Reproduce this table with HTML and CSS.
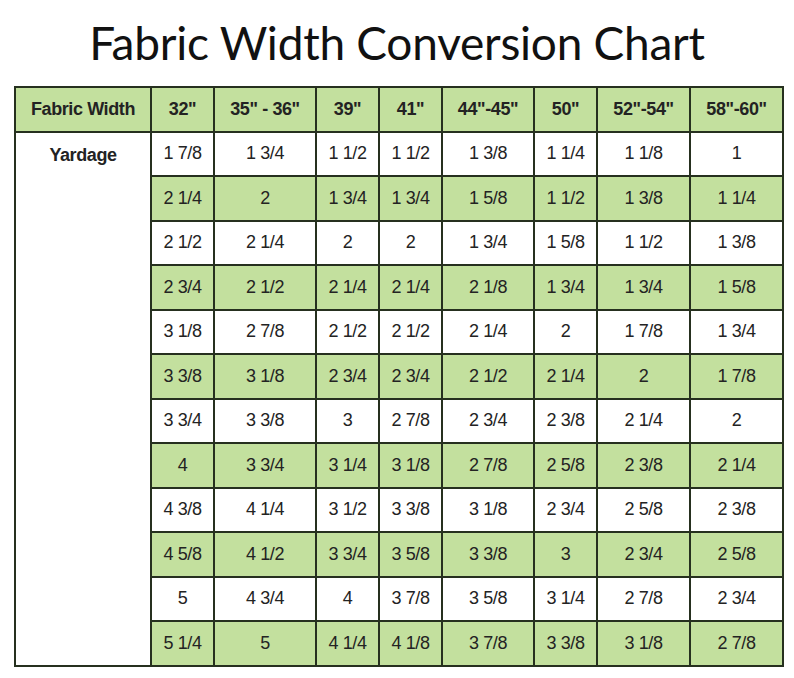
FILE: index.html
```html
<!DOCTYPE html>
<html>
<head>
<meta charset="utf-8">
<link rel="stylesheet" href="styles.css">
</head>
<body>
<h1 class="title">Fabric Width Conversion Chart</h1>
<table class="chart">
<colgroup>
<col class="c0"><col class="c1"><col class="c2"><col class="c3"><col class="c4"><col class="c5"><col class="c6"><col class="c7"><col class="c8">
</colgroup>
<tr class="g head"><th>Fabric Width</th><th>32"</th><th>35" - 36"</th><th>39"</th><th>41"</th><th>44"-45"</th><th>50"</th><th>52"-54"</th><th>58"-60"</th></tr>
<tr><th class="yard" rowspan="12">Yardage</th><td>1 7/8</td><td>1 3/4</td><td>1 1/2</td><td>1 1/2</td><td>1 3/8</td><td>1 1/4</td><td>1 1/8</td><td>1</td></tr>
<tr class="g"><td>2 1/4</td><td>2</td><td>1 3/4</td><td>1 3/4</td><td>1 5/8</td><td>1 1/2</td><td>1 3/8</td><td>1 1/4</td></tr>
<tr><td>2 1/2</td><td>2 1/4</td><td>2</td><td>2</td><td>1 3/4</td><td>1 5/8</td><td>1 1/2</td><td>1 3/8</td></tr>
<tr class="g"><td>2 3/4</td><td>2 1/2</td><td>2 1/4</td><td>2 1/4</td><td>2 1/8</td><td>1 3/4</td><td>1 3/4</td><td>1 5/8</td></tr>
<tr><td>3 1/8</td><td>2 7/8</td><td>2 1/2</td><td>2 1/2</td><td>2 1/4</td><td>2</td><td>1 7/8</td><td>1 3/4</td></tr>
<tr class="g"><td>3 3/8</td><td>3 1/8</td><td>2 3/4</td><td>2 3/4</td><td>2 1/2</td><td>2 1/4</td><td>2</td><td>1 7/8</td></tr>
<tr><td>3 3/4</td><td>3 3/8</td><td>3</td><td>2 7/8</td><td>2 3/4</td><td>2 3/8</td><td>2 1/4</td><td>2</td></tr>
<tr class="g"><td>4</td><td>3 3/4</td><td>3 1/4</td><td>3 1/8</td><td>2 7/8</td><td>2 5/8</td><td>2 3/8</td><td>2 1/4</td></tr>
<tr><td>4 3/8</td><td>4 1/4</td><td>3 1/2</td><td>3 3/8</td><td>3 1/8</td><td>2 3/4</td><td>2 5/8</td><td>2 3/8</td></tr>
<tr class="g"><td>4 5/8</td><td>4 1/2</td><td>3 3/4</td><td>3 5/8</td><td>3 3/8</td><td>3</td><td>2 3/4</td><td>2 5/8</td></tr>
<tr><td>5</td><td>4 3/4</td><td>4</td><td>3 7/8</td><td>3 5/8</td><td>3 1/4</td><td>2 7/8</td><td>2 3/4</td></tr>
<tr class="g"><td>5 1/4</td><td>5</td><td>4 1/4</td><td>4 1/8</td><td>3 7/8</td><td>3 3/8</td><td>3 1/8</td><td>2 7/8</td></tr>
</table>
</body>
</html>
```
FILE: styles.css
```css
html, body {
  margin: 0;
  padding: 0;
  background: #ffffff;
}
.title {
  margin: 0;
  padding-top: 18px;
  height: 68px;
  box-sizing: border-box;
  text-align: center;
  font-family: "Lato", "DejaVu Sans", sans-serif;
  font-weight: 400;
  font-size: 46px;
  line-height: 50px;
  color: #111111;
  letter-spacing: -0.25px;
}
.chart {
  margin: 18px 0 0 14px;
  width: 768px;
  border-collapse: collapse;
  table-layout: fixed;
  font-family: "Liberation Sans", Arial, sans-serif;
  font-size: 18px;
  letter-spacing: -0.4px;
  color: #232323;
}
.c0 { width: 136px; }
.c1 { width: 63px; }
.c2 { width: 102px; }
.c3 { width: 63px; }
.c4 { width: 63px; }
.c5 { width: 92px; }
.c6 { width: 63px; }
.c7 { width: 93px; }
.c8 { width: 93px; }
.chart th, .chart td {
  border: 2px solid #26301f;
  height: 42.5px;
  padding: 0;
  text-align: center;
  vertical-align: middle;
}
.chart .head th {
  font-weight: bold;
  font-size: 18px;
}
.chart .yard {
  background: #ffffff;
  vertical-align: top;
  font-weight: bold;
  font-size: 18px;
  padding-top: 12px;
}
.chart tr.g td, .chart tr.g th { background: #c3e09e; }
.chart td { background: #ffffff; }
```
